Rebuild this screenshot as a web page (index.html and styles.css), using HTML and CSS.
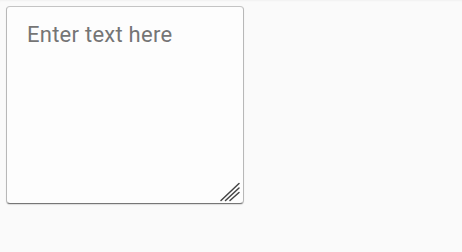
FILE: index.html
```html
<!DOCTYPE html>
<html>
<head>
<meta charset="utf-8">
<link rel="stylesheet" href="styles.css">
</head>
<body>
<div class="page">
  <div class="wrap">
    <textarea class="field" placeholder="Enter text here"></textarea>
    <svg class="grip" width="22" height="20" viewBox="0 0 22 20" aria-hidden="true">
      <g stroke="#444" stroke-width="1.5" stroke-linecap="round" fill="none">
        <line x1="1" y1="18.5" x2="19" y2="1.5"/>
        <line x1="5.5" y1="18.5" x2="19" y2="6"/>
        <line x1="10" y1="18.5" x2="19" y2="10.5"/>
      </g>
    </svg>
  </div>
</div>
</body>
</html>
```
FILE: styles.css
```css
html, body { margin: 0; padding: 0; }
body {
  background: #fafafa;
  font-family: Roboto, "Noto Sans", sans-serif;
  min-height: 252px;
  box-shadow: inset 0 2px 2px -1px rgba(0,0,0,0.04);
}
.page { padding: 6px; }
.wrap { position: relative; width: 238px; }
.field {
  display: block;
  box-sizing: border-box;
  width: 238px;
  height: 198px;
  margin: 0;
  padding: 15px 20px;
  border: 1px solid #b8b8b8;
  border-top-color: #c4c4c4;
  border-bottom-color: #767676;
  border-radius: 4px;
  background: #fdfdfd;
  box-shadow: 0 1px 1px rgba(0,0,0,0.12);
  font-family: Roboto, "Noto Sans", sans-serif;
  font-size: 22px;
  letter-spacing: 0.25px;
  line-height: 1.2;
  color: #333;
  outline: none;
  resize: none;
}
.field::placeholder { color: #757575; }
.grip {
  position: absolute;
  right: 2px;
  bottom: 2px;
  pointer-events: none;
}
```
